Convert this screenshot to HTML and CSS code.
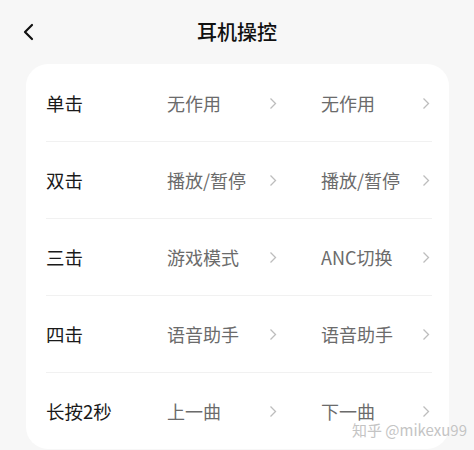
FILE: index.html
```html
<!DOCTYPE html>
<html lang="zh">
<head>
<meta charset="utf-8">
<link rel="stylesheet" href="styles.css">
</head>
<body>
<div class="page">
  <header class="topbar">
    <svg class="back" width="12" height="18" viewBox="0 0 12 18"><polyline points="9,2 2,9 9,16" fill="none" stroke="#111" stroke-width="2.2" stroke-linecap="round" stroke-linejoin="round"/></svg>
    <h1 class="title">耳机操控</h1>
  </header>
  <section class="card">
    <div class="row"><span class="label">单击</span><span class="val">无作用</span><span class="chev"><svg width="8" height="13" viewBox="0 0 8 13"><polyline points="1.5,1.5 6.5,6.5 1.5,11.5" fill="none" stroke="#bdbdbd" stroke-width="1.3"/></svg></span><span class="val">无作用</span><span class="chev"><svg width="8" height="13" viewBox="0 0 8 13"><polyline points="1.5,1.5 6.5,6.5 1.5,11.5" fill="none" stroke="#bdbdbd" stroke-width="1.3"/></svg></span></div>
    <div class="row"><span class="label">双击</span><span class="val">播放/暂停</span><span class="chev"><svg width="8" height="13" viewBox="0 0 8 13"><polyline points="1.5,1.5 6.5,6.5 1.5,11.5" fill="none" stroke="#bdbdbd" stroke-width="1.3"/></svg></span><span class="val">播放/暂停</span><span class="chev"><svg width="8" height="13" viewBox="0 0 8 13"><polyline points="1.5,1.5 6.5,6.5 1.5,11.5" fill="none" stroke="#bdbdbd" stroke-width="1.3"/></svg></span></div>
    <div class="row"><span class="label">三击</span><span class="val">游戏模式</span><span class="chev"><svg width="8" height="13" viewBox="0 0 8 13"><polyline points="1.5,1.5 6.5,6.5 1.5,11.5" fill="none" stroke="#bdbdbd" stroke-width="1.3"/></svg></span><span class="val">ANC切换</span><span class="chev"><svg width="8" height="13" viewBox="0 0 8 13"><polyline points="1.5,1.5 6.5,6.5 1.5,11.5" fill="none" stroke="#bdbdbd" stroke-width="1.3"/></svg></span></div>
    <div class="row"><span class="label">四击</span><span class="val">语音助手</span><span class="chev"><svg width="8" height="13" viewBox="0 0 8 13"><polyline points="1.5,1.5 6.5,6.5 1.5,11.5" fill="none" stroke="#bdbdbd" stroke-width="1.3"/></svg></span><span class="val">语音助手</span><span class="chev"><svg width="8" height="13" viewBox="0 0 8 13"><polyline points="1.5,1.5 6.5,6.5 1.5,11.5" fill="none" stroke="#bdbdbd" stroke-width="1.3"/></svg></span></div>
    <div class="row"><span class="label">长按2秒</span><span class="val">上一曲</span><span class="chev"><svg width="8" height="13" viewBox="0 0 8 13"><polyline points="1.5,1.5 6.5,6.5 1.5,11.5" fill="none" stroke="#bdbdbd" stroke-width="1.3"/></svg></span><span class="val">下一曲</span><span class="chev"><svg width="8" height="13" viewBox="0 0 8 13"><polyline points="1.5,1.5 6.5,6.5 1.5,11.5" fill="none" stroke="#bdbdbd" stroke-width="1.3"/></svg></span></div>
  </section>
  <div class="watermark">知乎 @mikexu99</div>
</div>
</body>
</html>
```
FILE: styles.css
```css
* { box-sizing: border-box; }
html, body {
  margin: 0;
  padding: 0;
  background: #f7f7f7;
  font-family: "Noto Sans CJK SC", "Noto Sans", sans-serif;
}
.page {
  position: relative;
  width: 474px;
  height: 450px;
  overflow: hidden;
  background: #f7f7f7;
}
.topbar {
  position: relative;
  height: 64px;
  display: flex;
  align-items: center;
  justify-content: center;
}
.back {
  position: absolute;
  left: 23px;
  top: 23px;
}
.title {
  margin: 0;
  font-size: 20px;
  font-weight: 500;
  color: #111;
  line-height: 1;
}
.card {
  margin-left: 26px;
  width: 423px;
  background: #fff;
  border-radius: 22px;
  padding-top: 1px;
}
.row {
  margin: 0 17px 0 20px;
  height: 77px;
  display: grid;
  grid-template-columns: 121px 103px 51px 102px auto;
  align-items: center;
  border-bottom: 1px solid #f1f1f1;
}
.row:last-child { border-bottom: none; height: 76px; }
.label {
  font-size: 18.5px;
  color: #1a1a1a;
  line-height: 1;
  white-space: nowrap;
}
.val {
  font-size: 18px;
  color: #6b6b6b;
  line-height: 1;
  white-space: nowrap;
}
.chev {
  display: flex;
  align-items: center;
  margin-left: -1px;
}
.watermark {
  position: absolute;
  left: 352px;
  top: 420px;
  font-size: 15px;
  color: #c4c4c4;
  text-shadow: 0 0 1px #fff;
  white-space: nowrap;
  line-height: 20px;
}
```
